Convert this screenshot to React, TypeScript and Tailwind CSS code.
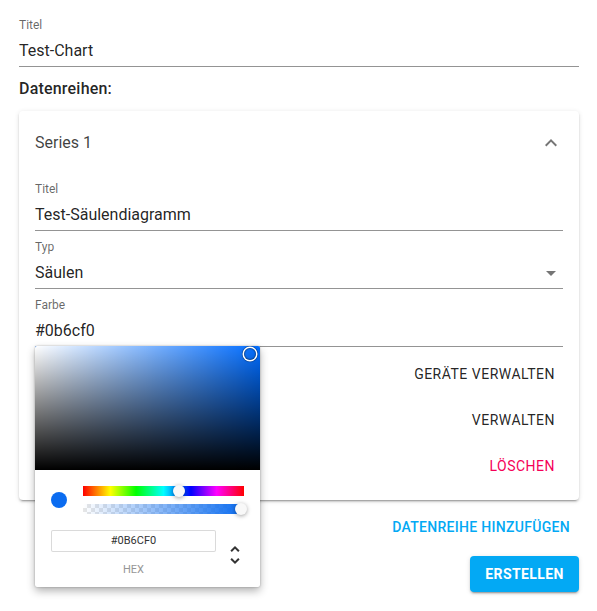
import React from "react";

function Field({ label, value, arrow, children }: { label: string; value: string; arrow?: boolean; children?: React.ReactNode }) {
  return (
    <div className="relative">
      <div className="h-4 text-[12px] leading-[16px] text-[rgba(0,0,0,0.6)]">{label}</div>
      <div className="flex items-center justify-between pt-[6px] pb-[3px] border-b border-[rgba(0,0,0,0.42)]">
        <span className="text-[16px] leading-[24px] text-[rgba(0,0,0,0.87)]">{value}</span>
        {arrow && (
          <svg width="24" height="24" viewBox="0 0 24 24">
            <path d="M7,10L12,15L17,10H7Z" fill="rgba(0,0,0,0.54)" />
          </svg>
        )}
      </div>
      {children}
    </div>
  );
}

function ColorPicker() {
  return (
    <div className="absolute left-0 top-[49px] z-10 w-[225px] rounded-[2px] bg-white shadow-[0_0_2px_rgba(0,0,0,0.3),0_4px_8px_rgba(0,0,0,0.3)] font-['Roboto',sans-serif]">
      <div className="relative h-[124px] overflow-hidden rounded-t-[2px] bg-[#006cff]">
        <div className="absolute inset-0 bg-[linear-gradient(to_right,#fff,rgba(255,255,255,0))]" />
        <div className="absolute inset-0 bg-[linear-gradient(to_top,#000,rgba(0,0,0,0))]" />
        <div className="absolute left-[209px] top-[2px] h-3 w-3 rounded-full shadow-[0_0_0_1.5px_#fff,inset_0_0_1px_1px_rgba(0,0,0,0.3),0_0_1px_2px_rgba(0,0,0,0.4)]" />
      </div>
      <div className="px-4 pt-4 pb-3">
        <div className="flex">
          <div className="flex w-8 items-center">
            <div className="h-4 w-4 rounded-full bg-[#0b6cf0]" />
          </div>
          <div className="flex-1">
            <div className="relative mb-2 h-[10px] bg-[linear-gradient(to_right,#f00_0%,#ff0_17%,#0f0_33%,#0ff_50%,#00f_67%,#f0f_83%,#f00_100%)]">
              <div className="absolute left-[90px] top-[-1px] h-3 w-3 rounded-full bg-[#f8f8f8] shadow-[0_1px_4px_0_rgba(0,0,0,0.37)]" />
            </div>
            <div className="relative h-[10px] bg-[conic-gradient(#e6e6e6_90deg,#fff_90deg_180deg,#e6e6e6_180deg_270deg,#fff_270deg)] bg-[length:8px_8px]">
              <div className="absolute inset-0 bg-[linear-gradient(to_right,rgba(11,108,240,0),rgb(11,108,240))]" />
              <div className="absolute left-[152px] top-[-1px] h-3 w-3 rounded-full bg-[#f8f8f8] shadow-[0_1px_4px_0_rgba(0,0,0,0.37)]" />
            </div>
          </div>
        </div>
        <div className="flex pt-4">
          <div className="flex-1">
            <div className="flex h-[22px] items-center justify-center rounded-[2px] shadow-[inset_0_0_0_1px_#dadada] text-[11px] text-[#333]">
              #0B6CF0
            </div>
            <div className="mt-3 text-center text-[11px] leading-[11px] uppercase text-[#969696]">hex</div>
          </div>
          <div className="relative w-[28px]">
            <svg width="24" height="24" viewBox="0 0 24 24" className="absolute left-[7px] top-[13px]">
              <path
                fill="#333"
                d="M12,18.17L8.83,15L7.41,16.41L12,21L16.59,16.41L15.17,15M12,5.83L15.17,9L16.59,7.59L12,3L7.41,7.59L8.83,9L12,5.83Z"
              />
            </svg>
          </div>
        </div>
      </div>
    </div>
  );
}

export default function App() {
  return (
    <div className="min-h-[611px] w-[597px] bg-white pl-[19px] pr-[18px] pt-[17px] font-['Roboto',sans-serif]">
      <Field label="Titel" value="Test-Chart" />
      <div className="mt-[10px] h-6 text-[16px] leading-[24px] font-medium tracking-[0.2px] text-[rgba(0,0,0,0.87)]">Datenreihen:</div>
      <div className="mt-[10px] rounded-[4px] bg-white shadow-[0_3px_1px_-2px_rgba(0,0,0,0.2),0_2px_2px_0_rgba(0,0,0,0.14),0_1px_5px_0_rgba(0,0,0,0.12)]">
        <div className="flex h-[62px] items-center justify-between px-4 pt-[1px]">
          <span className="text-[16px] text-[rgba(0,0,0,0.75)]">Series 1</span>
          <svg width="24" height="24" viewBox="0 0 24 24">
            <path d="M7.41,15.41L12,10.83L16.59,15.41L18,14L12,8L6,14L7.41,15.41Z" fill="rgba(0,0,0,0.54)" />
          </svg>
        </div>
        <div className="px-4 pt-2 pb-4">
          <div className="flex flex-col gap-2">
            <Field label="Titel" value="Test-Säulendiagramm" />
            <Field label="Typ" value="Säulen" arrow />
            <Field label="Farbe" value="#0b6cf0">
              <ColorPicker />
            </Field>
          </div>
          <div className="mt-[9px] flex flex-col items-end gap-[10px]">
            <button className="h-9 px-2 pt-[1px] text-[14px] font-normal uppercase tracking-[0.5px] text-[rgba(0,0,0,0.87)]">Geräte verwalten</button>
            <button className="h-9 px-2 pt-[1px] text-[14px] font-normal uppercase tracking-[0.5px] text-[rgba(0,0,0,0.87)]">Verwalten</button>
            <button className="h-9 px-2 pt-[1px] text-[14px] font-normal uppercase tracking-[0.5px] text-[#f50057]">Löschen</button>
          </div>
        </div>
      </div>
      <div className="mt-[9px] flex justify-end pr-[9px]">
        <button className="h-9 pt-[1px] text-[14px] font-medium uppercase tracking-[0.3px] text-[#03a9f4]">Datenreihe hinzufügen</button>
      </div>
      <div className="mt-[11px] flex justify-end">
        <button className="h-9 w-[109px] rounded-[4px] bg-[#03a9f4] pt-[1px] text-[14px] font-bold uppercase tracking-[0.4px] text-white shadow-[0_3px_1px_-2px_rgba(0,0,0,0.2),0_2px_2px_0_rgba(0,0,0,0.14),0_1px_5px_0_rgba(0,0,0,0.12)]">
          Erstellen
        </button>
      </div>
    </div>
  );
}
